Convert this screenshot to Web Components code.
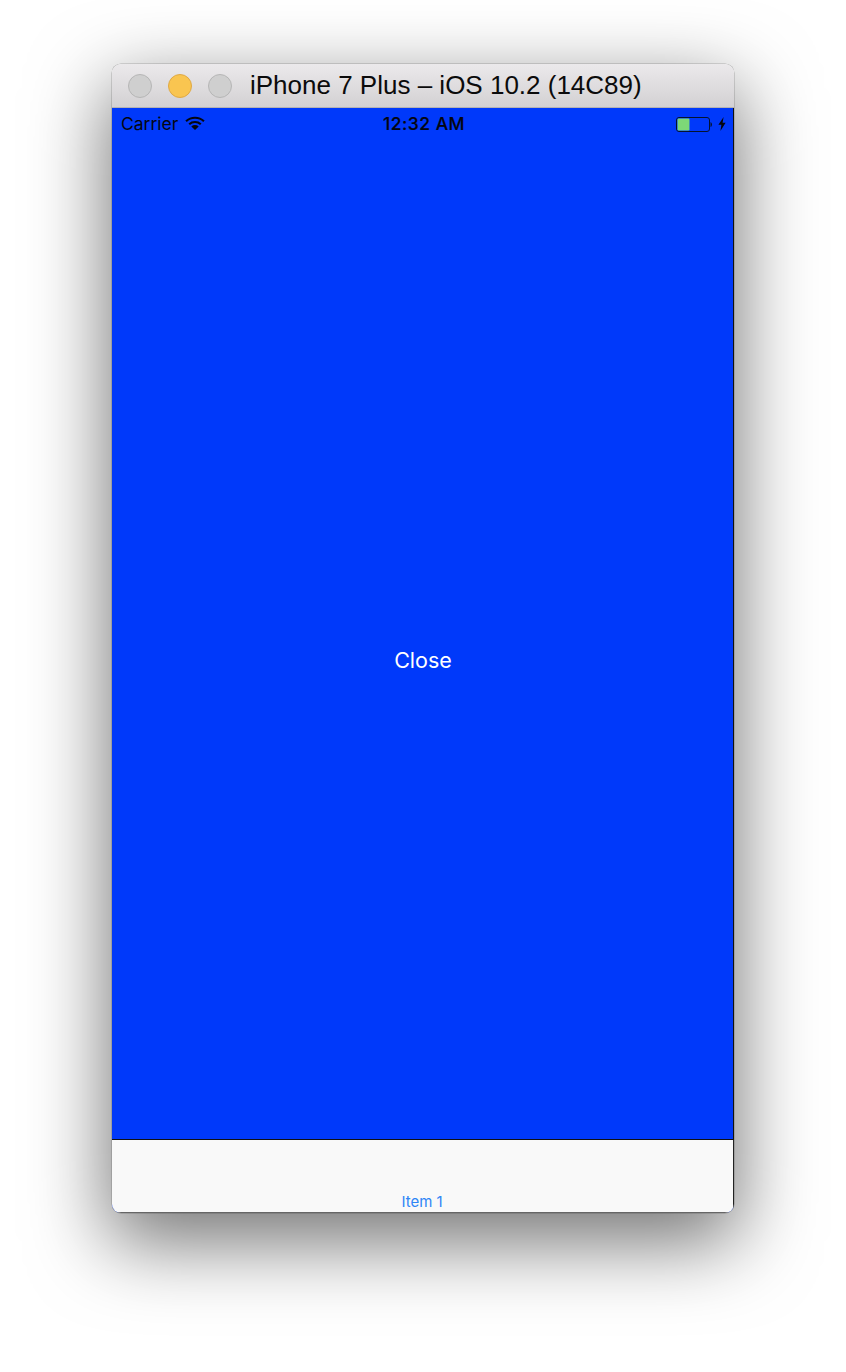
<!DOCTYPE html>
<html>
<head>
<meta charset="utf-8">
<title>iPhone 7 Plus</title>
<style>
    html, body { margin: 0; background: #fff; }
    body { font-family: "Inter", "Liberation Sans", sans-serif; }
</style>
</head>
<body>
<sim-window title="iPhone 7 Plus – iOS 10.2 (14C89)">
    <sim-screen>
        <sim-status-bar carrier="Carrier" time="12:32 AM"></sim-status-bar>
        <sim-content label="Close"></sim-content>
        <sim-tab-bar><sim-tab>Item 1</sim-tab></sim-tab-bar>
    </sim-screen>
</sim-window>

<script>
class SimWindow extends HTMLElement {
    connectedCallback() {
        this.attachShadow({ mode: 'open' });
        this.shadowRoot.innerHTML = `
            <style>
                :host { display: block; padding: 64px 112px 159px; }
                .window {
                    width: 622px;
                    height: 1149px;
                    display: flex;
                    flex-direction: column;
                    border-radius: 9px;
                    overflow: hidden;
                    box-shadow: 0 26px 78px 4px rgba(0, 0, 0, 0.54), 0 0 0 0.5px rgba(0, 0, 0, 0.25);
                }
                .titlebar {
                    flex: none;
                    height: 43px;
                    display: flex;
                    align-items: center;
                    gap: 16px;
                    padding: 0 16px;
                    background: linear-gradient(#ebe9eb, #d3d1d3);
                    border-bottom: 1px solid #b4b2b4;
                }
                .dot {
                    width: 22px;
                    height: 22px;
                    border-radius: 50%;
                    background: #cfcfcf;
                    border: 1px solid #b6b6b6;
                }
                .dot.min { background: #f9c550; border-color: #dfa945; }
                .title {
                    margin-left: 2px;
                    font: 26px "Liberation Sans", sans-serif;
                    color: #0b0b0b;
                    white-space: nowrap;
                }
            </style>
            <div class="window">
                <div class="titlebar">
                    <span class="dot"></span>
                    <span class="dot min"></span>
                    <span class="dot"></span>
                    <span class="title">${this.getAttribute('title')}</span>
                </div>
                <slot></slot>
            </div>
        `;
    }
}

class SimScreen extends HTMLElement {
    connectedCallback() {
        this.attachShadow({ mode: 'open' });
        this.shadowRoot.innerHTML = `
            <style>
                :host {
                    flex: 1;
                    display: flex;
                    flex-direction: column;
                    background: #0039fa;
                    box-shadow: inset -1px 0 0 #111, inset 0 -1px 0 #555;
                }
            </style>
            <slot></slot>
        `;
    }
}

class SimStatusBar extends HTMLElement {
    connectedCallback() {
        this.attachShadow({ mode: 'open' });
        this.shadowRoot.innerHTML = `
            <style>
                :host {
                    flex: none;
                    height: 32px;
                    display: grid;
                    grid-template-columns: 1fr auto 1fr;
                    align-items: center;
                    padding: 0 8px 0 9px;
                    color: #05060f;
                    font: 17.5px "Inter", "Liberation Sans", sans-serif;
                }
                .left { display: flex; align-items: center; gap: 7px; }
                .left span { margin-top: -2px; }
                .left svg { margin-top: -3px; }
                .time { font-weight: 500; font-size: 17.5px; letter-spacing: 0.5px; margin: -2px 0 0 1px; -webkit-text-stroke: 0.2px #05060f; }
                .right { display: flex; align-items: center; justify-content: flex-end; gap: 6px; }
                svg { display: block; }
            </style>
            <div class="left">
                <span>${this.getAttribute('carrier')}</span>
                <svg width="20" height="14" viewBox="0 0 19 14" preserveAspectRatio="none">
                    <path d="M1 5.2 A12 12 0 0 1 18 5.2" fill="none" stroke="#05060f" stroke-width="2"/>
                    <path d="M4 8.2 A8 8 0 0 1 15 8.2" fill="none" stroke="#05060f" stroke-width="2"/>
                    <path d="M9.5 14 L6 10.4 A5 5 0 0 1 13 10.4 Z" fill="#05060f"/>
                </svg>
            </div>
            <span class="time">${this.getAttribute('time')}</span>
            <div class="right">
                <svg width="36" height="15" viewBox="0 0 36 15">
                    <rect x="0.5" y="0.5" width="33" height="14" rx="2.5" fill="none" stroke="#05132e" stroke-width="1"/>
                    <rect x="1.5" y="1.5" width="12" height="12" rx="1.2" fill="#7dd877"/>
                    <path d="M34.5 5 q1.5 .5 1.5 2.5 t-1.5 2.5 z" fill="#05132e"/>
                </svg>
                <svg width="8" height="14" viewBox="0 0 8 14">
                    <path d="M5.6 0 L0.4 7.8 H3.4 L2.4 14 L7.6 5.8 H4.6 Z" fill="#05060f"/>
                </svg>
            </div>
        `;
    }
}

class SimContent extends HTMLElement {
    connectedCallback() {
        this.attachShadow({ mode: 'open' });
        this.shadowRoot.innerHTML = `
            <style>
                :host {
                    flex: 1;
                    display: block;
                    padding-top: 505px;
                    text-align: center;
                    color: #fff;
                    font: 21.5px/30px "Inter", "Liberation Sans", sans-serif;
                }
            </style>
            <span>${this.getAttribute('label')}</span>
        `;
    }
}

class SimTabBar extends HTMLElement {
    connectedCallback() {
        this.attachShadow({ mode: 'open' });
        this.shadowRoot.innerHTML = `
            <style>
                :host {
                    flex: none;
                    height: 73px;
                    display: flex;
                    justify-content: center;
                    align-items: flex-end;
                    background: #f9f9f9;
                    border-top: 1px solid #111;
                    box-shadow: inset -1px 0 0 #222, inset 0 -1px 0 #666;
                }
            </style>
            <slot></slot>
        `;
    }
}

class SimTab extends HTMLElement {
    connectedCallback() {
        this.attachShadow({ mode: 'open' });
        this.shadowRoot.innerHTML = `
            <style>
                :host {
                    display: block;
                    padding: 0 2px 2px 0;
                    color: #2f86f6;
                    font: 15px/18px "Inter", "Liberation Sans", sans-serif;
                }
            </style>
            <slot></slot>
        `;
    }
}

customElements.define('sim-window', SimWindow);
customElements.define('sim-screen', SimScreen);
customElements.define('sim-status-bar', SimStatusBar);
customElements.define('sim-content', SimContent);
customElements.define('sim-tab-bar', SimTabBar);
customElements.define('sim-tab', SimTab);
</script>
</body>
</html>
